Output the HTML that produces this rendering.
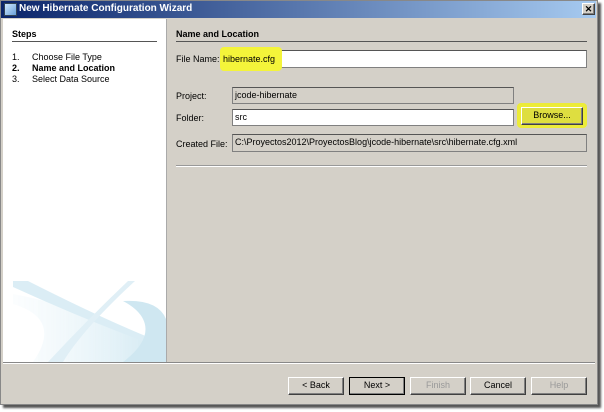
<!DOCTYPE html>
<html><head><style>
body{margin:0;width:604px;height:412px;background:#fff;position:relative;overflow:hidden;font-family:"Liberation Sans",sans-serif;font-size:9px;color:#000}
.a{position:absolute}
.win{left:0;top:0;width:598px;height:405px;background:#d4d0c8;border:1px solid #888;box-sizing:border-box;box-shadow:3px 3px 2px #555}
.title{left:1px;top:1px;width:595px;height:17px;background:linear-gradient(90deg,#0a246a,#a6caf0)}
.field{background:#fff;border:1px solid #808080;border-top-color:#555;box-sizing:border-box;padding:2px 2px;font-size:9px}
.ro{background:#d4d0c8}
.btn{border:1px solid #404040;border-top-color:#fff;border-left-color:#fff;box-shadow:inset -1px -1px #808080;box-sizing:border-box;text-align:center;line-height:15px;background:#d4d0c8}
.n{display:inline-block;width:20px}
</style></head><body>
<div class="a win"></div>
<div class="a title"></div>
<div class="a" style="left:4px;top:3px;width:11px;height:11px;background:linear-gradient(135deg,#cfe8ff,#6aa0d8);border:1px solid #345"></div>
<div class="a" style="left:19px;top:3px;color:#fff;font-weight:bold;font-size:10px">New Hibernate Configuration Wizard</div>
<div class="a btn" style="left:582px;top:3px;width:13px;height:12px;line-height:10px;font-weight:bold;font-size:9px">✕</div>
<div class="a" style="left:3px;top:19px;width:163px;height:343px;background:#fff;overflow:hidden">
<svg width="163" height="343" style="position:absolute;left:0;top:0;opacity:.55">
<defs><linearGradient id="g" x1="0" x2="1"><stop offset="0" stop-color="#dceef7" stop-opacity=".2"/><stop offset="1" stop-color="#a9d5e6"/></linearGradient></defs>
<path d="M10 275 Q90 290 163 330 L163 343 L30 343 Q60 300 10 285Z" fill="url(#g)"/>
<path d="M10 262 L25 262 Q100 300 150 320 L150 326 Q80 300 10 268Z" fill="#bfe0ee"/>
<path d="M125 262 L132 262 Q80 310 60 343 L45 343 Q85 300 125 262Z" fill="#c7e3ef"/>
<path d="M120 282 Q155 280 163 300 L163 343 L120 343 Q150 320 140 300 Q135 290 120 282Z" fill="#a9d5e6"/>
</svg>
</div>
<div class="a" style="left:12px;top:29px;font-weight:bold">Steps</div>
<div class="a" style="left:12px;top:41px;width:145px;height:1px;background:#555"></div>
<div class="a" style="left:12px;top:52px;line-height:11px"><span class="n">1.</span>Choose File Type<br><b><span class="n">2.</span>Name and Location</b><br><span class="n">3.</span>Select Data Source</div>
<div class="a" style="left:166px;top:19px;width:1px;height:343px;background:#aaa"></div>
<div class="a" style="left:176px;top:29px;font-weight:bold">Name and Location</div>
<div class="a" style="left:176px;top:41px;width:411px;height:1px;background:#555"></div>
<div class="a" style="left:176px;top:54px">File Name:</div>
<div class="a field" style="left:221px;top:50px;width:366px;height:18px"></div>
<div class="a" style="left:220px;top:47px;width:62px;height:24px;background:#f4f43a;border-radius:4px"></div>
<div class="a" style="left:223px;top:54px">hibernate.cfg</div>
<div class="a" style="left:176px;top:91px">Project:</div>
<div class="a field ro" style="left:232px;top:87px;width:282px;height:17px">jcode-hibernate</div>
<div class="a" style="left:176px;top:113px">Folder:</div>
<div class="a field" style="left:232px;top:109px;width:282px;height:17px">src</div>
<div class="a" style="left:517px;top:103px;width:70px;height:25px;background:#f0f020;border-radius:4px;opacity:.85"></div>
<div class="a btn" style="left:521px;top:107px;width:62px;height:18px;background:#dede40">Browse...</div>
<div class="a" style="left:176px;top:139px">Created File:</div>
<div class="a field ro" style="left:232px;top:134px;width:355px;height:18px">C:\Proyectos2012\ProyectosBlog\jcode-hibernate\src\hibernate.cfg.xml</div>
<div class="a" style="left:176px;top:165px;width:411px;height:1px;background:#999;border-bottom:1px solid #fff"></div>
<div class="a" style="left:3px;top:362px;width:592px;height:1px;background:#888;border-bottom:1px solid #fff"></div>
<div class="a btn" style="left:288px;top:377px;width:56px;height:18px">&lt; Back</div>
<div class="a btn" style="left:349px;top:377px;width:56px;height:18px;border:1px solid #000">Next &gt;</div>
<div class="a btn" style="left:410px;top:377px;width:56px;height:18px;color:#999">Finish</div>
<div class="a btn" style="left:470px;top:377px;width:56px;height:18px">Cancel</div>
<div class="a btn" style="left:531px;top:377px;width:56px;height:18px;color:#999">Help</div>
</body></html>
